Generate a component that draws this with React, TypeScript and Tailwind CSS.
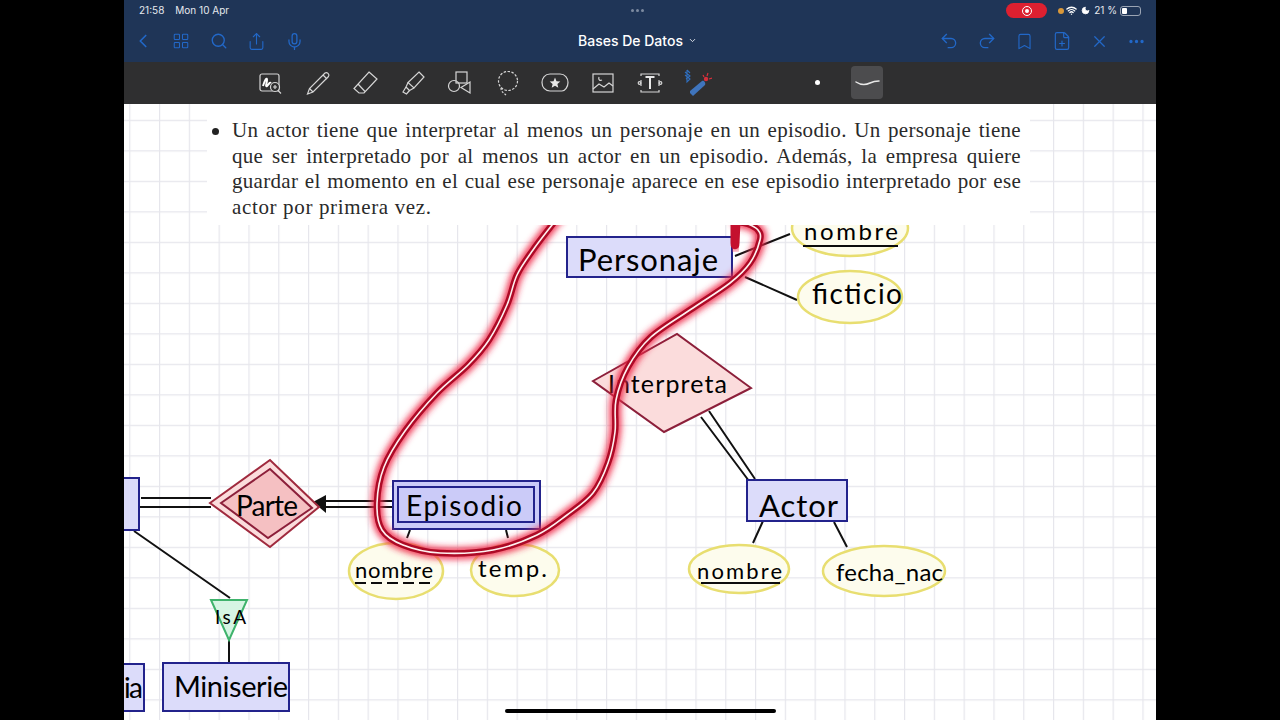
import { ChevronLeft, LayoutGrid, Search, Share, Mic, Undo2, Redo2, Bookmark, FilePlus, X, Ellipsis, ChevronDown, Wifi, Moon } from "lucide-react";

const hand = [
  { t: "Personaje", x: 578, y: 271, w: 140, s: 31 },
  { t: "nombre", x: 804, y: 240, w: 94, s: 24 },
  { t: "ficticio", x: 812, y: 304, w: 90, s: 28 },
  { t: "Interpreta", x: 608, y: 393, w: 119, s: 25 },
  { t: "Actor", x: 759, y: 517, w: 79, s: 31 },
  { t: "nombre", x: 697, y: 579, w: 85, s: 22 },
  { t: "fecha_nac", x: 836, y: 581, w: 107, s: 24 },
  { t: "Episodio", x: 406, y: 516, w: 116, s: 28 },
  { t: "nombre", x: 355, y: 578, w: 78, s: 22 },
  { t: "temp.", x: 478, y: 577, w: 69, s: 24 },
  { t: "Parte", x: 236, y: 516, w: 62, s: 28 },
  { t: "IsA", x: 215, y: 624, w: 31, s: 19 },
  { t: "Miniserie", x: 174, y: 697, w: 114, s: 29 },
  { t: "ia", x: 124, y: 698, w: 19, s: 28 },
];

const redPoints = [
  [562, 212], [552, 225], [533, 250], [517, 275], [507, 305], [489, 340], [468, 365], [437, 393], [405, 431],
  [384, 467], [377, 503], [382, 530], [403, 545], [440, 553], [493, 550], [537, 535], [567, 515], [593, 493],
  [608, 463], [615, 432], [616, 400], [628, 367], [651, 337], [693, 308], [730, 283], [750, 263], [760, 240],
  [758, 230], [748, 224], [738, 222],
];

// curva suave que pasa por todos los puntos
const smooth = (p: number[][]) => {
  let d = `M${p[0][0]} ${p[0][1]}`;
  for (let i = 0; i < p.length - 1; i++) {
    const a = p[Math.max(i - 1, 0)];
    const b = p[i];
    const c = p[i + 1];
    const e = p[Math.min(i + 2, p.length - 1)];
    d += `C${b[0] + (c[0] - a[0]) / 6} ${b[1] + (c[1] - a[1]) / 6} ${c[0] - (e[0] - b[0]) / 6} ${c[1] - (e[1] - b[1]) / 6} ${c[0]} ${c[1]}`;
  }
  return d;
};

const redPath = smooth(redPoints);
const hookPath = "M733 222L733 243C733 248 737 248 737 243L738 222";

const lines = [
  "Un actor tiene que interpretar al menos un personaje en un episodio. Un personaje tiene",
  "que ser interpretado por al menos un actor en un episodio. Además, la empresa quiere",
  "guardar el momento en el cual ese personaje aparece en ese episodio interpretado por ese",
];

function Diagram() {
  return (
    <svg className="absolute inset-0" width="1032" height="616" viewBox="124 104 1032 616">
      <defs>
        <pattern id="grid" x="606" y="333.3" width="29.8" height="30.5" patternUnits="userSpaceOnUse">
          <path d="M0 0H29.8M0 0V30.5" stroke="#e6e6ec" strokeWidth="2.4" fill="none" />
        </pattern>
        <filter id="glow" x="-20%" y="-20%" width="140%" height="140%">
          <feGaussianBlur stdDeviation="3" />
        </filter>
      </defs>
      <rect x="124" y="104" width="1032" height="616" fill="url(#grid)" />

      {/* lineas */}
      <g stroke="#111" strokeWidth="2" fill="none">
        <path d="M141 498H211M140 507H211M324 501H393M324 507H393" />
        <path d="M134 531L230 598M229 640V663" />
        <path d="M410 530L407 538M506 530L508 538" />
        <path d="M701 417L749 481M709 411L755 479" />
        <path d="M763 521L753 543M834 522L847 547" />
        <path d="M735 256L790 234M745 277L797 300" />
      </g>
      <path d="M313 502L326 495V513Z" fill="#111" />

      {/* atributos */}
      <g fill="#fdfced" stroke="#e8de70" strokeWidth="2.5">
        <ellipse cx="850" cy="228" rx="58" ry="28" />
        <ellipse cx="850" cy="297" rx="52" ry="26" />
        <ellipse cx="739" cy="569" rx="50" ry="24" />
        <ellipse cx="884" cy="571" rx="61" ry="25" />
        <ellipse cx="396" cy="571" rx="47" ry="28" />
        <ellipse cx="515" cy="570" rx="44" ry="26" />
      </g>

      {/* entidades */}
      <g fill="#dcdcfa" stroke="#23238c" strokeWidth="2">
        <rect x="567" y="237" width="165" height="40" />
        <rect x="747" y="480" width="100" height="41" />
        <rect x="110" y="478" width="29" height="52" />
        <rect x="163" y="663" width="126" height="48" />
        <rect x="110" y="664" width="34" height="47" />
        <rect x="393" y="481" width="147" height="48" fill="#cbcbf8" />
        <rect x="398" y="487" width="136" height="35" fill="#cbcbf8" />
      </g>

      {/* relaciones */}
      <path d="M593 381L677 334L751 388L664 432Z" fill="#fbdcdc" stroke="#8c1f3a" strokeWidth="2" />
      <path d="M210 503L270 460L319 507L270 547Z" fill="#fbdcdc" stroke="#a02a3e" strokeWidth="2" />
      <path d="M221 503L270 469L312 508L268 538Z" fill="#f5c0c2" stroke="#8c1f3a" strokeWidth="2" />
      <path d="M211 600H247L229 640Z" fill="#d6f5e3" stroke="#3fb36c" strokeWidth="2" />

      {/* textos a mano */}
      <g fill="#000" className="font-['Lato'] font-normal">
        {hand.map((h, i) => (
          <text key={i} x={h.x} y={h.y} fontSize={h.s} textLength={h.w} lengthAdjust="spacing">{h.t}</text>
        ))}
      </g>
      <g stroke="#0c0c0c" strokeWidth="2" fill="none">
        <path d="M803 246H898M701 583H780" />
        <path d="M355 583H432" strokeDasharray="11 5" />
      </g>

      {/* rotulador rojo */}
      <g fill="none" strokeLinecap="round" strokeLinejoin="round">
        <path d={redPath} stroke="#f02a48" strokeOpacity="0.9" strokeWidth="12" filter="url(#glow)" />
        <path d={hookPath} stroke="#f02a48" strokeOpacity="0.8" strokeWidth="9" filter="url(#glow)" />
        <path d={redPath} stroke="#ad0a26" strokeWidth="6.5" />
        <path d={hookPath} stroke="#c4102e" strokeWidth="5" />
        <path d={redPath} stroke="#fff0f0" strokeWidth="1.6" />
      </g>
    </svg>
  );
}

function Tools() {
  const c = "stroke-[#d6d6d6] fill-none";
  return (
    <div className="flex items-center gap-[19.5px] ml-[132px]">
      <svg width="28" height="28" viewBox="0 0 28 28" className={c} strokeWidth="1.2">
        <rect x="4" y="5" width="19" height="17" rx="2" />
        <path d="M7 17C9 10 11 8 11 11C11 14 9 18 11 17C13 15 14 13 15 14" strokeWidth="2" stroke="#fff" />
        <circle cx="19" cy="18" r="4.5" fill="#2f2f2f" />
        <path d="M17 18H21M19 16V20M22 21.5L25 24.5" />
      </svg>
      <svg width="28" height="28" viewBox="0 0 28 28" className={c} strokeWidth="1.2">
        <path d="M21 4C23 2.5 26 5.5 24.5 7.5L9 23L3.5 25L5.5 19.5Z" />
        <path d="M19 6L23 10M5.5 19.5L9 23" />
      </svg>
      <svg width="28" height="28" viewBox="0 0 28 28" className={c} strokeWidth="1.2">
        <path d="M18 3L26 10L13 24H8L3 19.5Z" />
        <path d="M7 15L14 22.5" />
      </svg>
      <svg width="28" height="28" viewBox="0 0 28 28" className={c} strokeWidth="1.2">
        <path d="M20 3L25 8L15 19L9 13.5Z" />
        <path d="M9 13.5L7 18L10.5 21.5L15 19" />
        <path d="M7 18L4 23L7.5 25L10.5 21.5" />
      </svg>
      <svg width="28" height="28" viewBox="0 0 28 28" className={c} strokeWidth="1.2">
        <rect x="10" y="3" width="11" height="11" />
        <circle cx="8" cy="17" r="5.5" />
        <path d="M24 13V24L15 18.5Z" />
      </svg>
      <svg width="28" height="28" viewBox="0 0 28 28" className={c} strokeWidth="1.2">
        <circle cx="14" cy="12" r="9.5" strokeDasharray="2.5 1.5" />
        <path d="M7 19C7 23 10 24 12 26" strokeDasharray="2 1.5" />
      </svg>
      <svg width="28" height="28" viewBox="0 0 28 28" className={c} strokeWidth="1.2">
        <path d="M9 5H19C24 5 27 9 27 13.5C27 18 24 22 21 22H9C4 22 1 18 1 13.5C1 9 4 5 9 5Z" />
        <path d="M14 8.5L15.5 12.2L19.3 12.5L16.4 15L17.3 18.8L14 16.7L10.7 18.8L11.6 15L8.7 12.5L12.5 12.2Z" fill="#e8e8e8" stroke="none" />
      </svg>
      <svg width="28" height="28" viewBox="0 0 28 28" className={c} strokeWidth="1.2">
        <rect x="4" y="5" width="20" height="18" />
        <path d="M4 20L10 15L15 18L20 14L24 17" />
        <path d="M10 8C9 11 11 12 13 11" />
      </svg>
      <svg width="28" height="28" viewBox="0 0 28 28" className={c} strokeWidth="1.2">
        <path d="M5 7V5H23V7M5 11V17M23 11V17M5 21V23H23V21" />
        <circle cx="3.5" cy="14" r="1.3" />
        <circle cx="24.5" cy="14" r="1.3" />
        <path d="M9.5 8H18.5M14 8V20" stroke="#e8e8e8" strokeWidth="2" />
      </svg>
      <svg width="28" height="28" viewBox="0 0 28 28" fill="none">
        <path d="M6 24L9 27L21 16C22 14 20 11 18 12L6 22Z" fill="#3f74bc" />
        <path d="M23 7L24 4M25 10L28 9M20 8L19 6" stroke="#d6303c" strokeWidth="1.2" />
        <circle cx="22" cy="10" r="2.2" fill="#d6303c" />
        <path d="M1 3L6 7L2 10M3 1V13L6 10L1 6M3 1L6 4" stroke="#2f6fc0" strokeWidth="1.1" />
      </svg>
    </div>
  );
}

export default function App() {
  const blue = "#2268c8";
  return (
    <div className="h-screen w-[1280px] overflow-hidden bg-black flex justify-center font-['Inter',sans-serif]">
      <div className="w-[1032px] h-full flex flex-col">
        <div className="bg-[#1f3557] h-[62px] shrink-0 flex flex-col">
          <div className="h-[21px] flex items-center justify-between pl-[15px] pr-[15px] relative text-[#e6e9ee] text-[10px]">
            <div className="flex gap-[11px]">
              <span>21:58</span>
              <span>Mon 10 Apr</span>
            </div>
            <div className="absolute left-[507px] top-[9px] flex gap-[2px]">
              <span className="w-[3px] h-[3px] rounded-full bg-[#7d8ba0]" />
              <span className="w-[3px] h-[3px] rounded-full bg-[#7d8ba0]" />
              <span className="w-[3px] h-[3px] rounded-full bg-[#7d8ba0]" />
            </div>
            <div className="flex items-center">
              <div className="w-[41px] h-[15px] rounded-full bg-[#dd2030] flex items-center justify-center mr-[11px]">
                <div className="w-[10px] h-[10px] rounded-full border border-white flex items-center justify-center">
                  <div className="w-[4px] h-[4px] rounded-full bg-white" />
                </div>
              </div>
              <span className="w-[6px] h-[6px] rounded-full bg-[#d9983a] mr-[2px]" />
              <Wifi size={11} color="#fff" strokeWidth={3} className="mr-[4px]" />
              <Moon size={9} color="#fff" fill="#fff" className="mr-[4px]" />
              <span className="mr-[3px]">21 %</span>
              <div className="w-[21px] h-[10px] rounded-[3px] border border-[#9aa4b4] p-[1px]">
                <div className="w-[5px] h-full bg-white rounded-[1px]" />
              </div>
            </div>
          </div>
          <div className="flex-1 flex items-center justify-between relative pb-[1px]">
            <div className="flex items-center ml-[8px]">
              <ChevronLeft size={22} color={blue} strokeWidth={1.8} className="mr-[18px]" />
              <LayoutGrid size={18} color={blue} strokeWidth={1.4} className="mr-[20px]" />
              <Search size={18} color={blue} strokeWidth={1.8} className="mr-[19px]" />
              <Share size={19} color={blue} strokeWidth={1.4} className="mr-[19px]" />
              <Mic size={19} color={blue} strokeWidth={1.6} />
            </div>
            <div className="absolute left-[454px] top-[9px] flex items-center gap-[5px] text-white text-[14px] font-medium">
              <span>Bases De Datos</span>
              <ChevronDown size={9} color="#dfe3ea" strokeWidth={2.5} />
            </div>
            <div className="flex items-center mr-[10px] gap-[18px]">
              <Undo2 size={20} color={blue} strokeWidth={1.6} />
              <Redo2 size={20} color={blue} strokeWidth={1.6} />
              <Bookmark size={19} color={blue} strokeWidth={1.4} />
              <FilePlus size={20} color={blue} strokeWidth={1.4} />
              <X size={19} color={blue} strokeWidth={1.6} />
              <Ellipsis size={19} color={blue} strokeWidth={2.2} />
            </div>
          </div>
        </div>

        <div className="bg-[#2f2f30] h-[42px] shrink-0 flex items-center relative">
          <Tools />
          <span className="absolute left-[691px] top-[18px] w-[5px] h-[5px] rounded-full bg-white" />
          <div className="absolute left-[727px] top-[4px] w-[32px] h-[33px] rounded-[4px] bg-[#4c4c4e] flex items-center justify-center">
            <svg width="26" height="10" viewBox="0 0 26 10" fill="none">
              <path d="M2 4C8 8 12 7 16 5C19 3.5 22 3 25 3" stroke="#e8e8e8" strokeWidth="1.5" strokeLinecap="round" />
            </svg>
          </div>
        </div>

        <div className="flex-1 relative overflow-hidden bg-white">
          <Diagram />
          <div className="absolute left-[83px] top-0 w-[823px] h-[121px] bg-white pl-[25px] pr-[9px] pt-[14px] font-['Liberation_Serif',serif] text-[21px] leading-[25.5px] tracking-[0.3px] text-[#2a2a2a]">
            <span className="absolute left-[5px] top-[24px] w-[7px] h-[7px] rounded-full bg-[#222]" />
            {lines.map((l, i) => (
              <div key={i} className="text-justify [text-align-last:justify]">{l}</div>
            ))}
            <div className="tracking-[0.65px]">actor por primera vez.</div>
          </div>
          <div className="absolute left-[381px] bottom-[7px] w-[271px] h-[4px] rounded-full bg-black" />
        </div>
      </div>
    </div>
  );
}
